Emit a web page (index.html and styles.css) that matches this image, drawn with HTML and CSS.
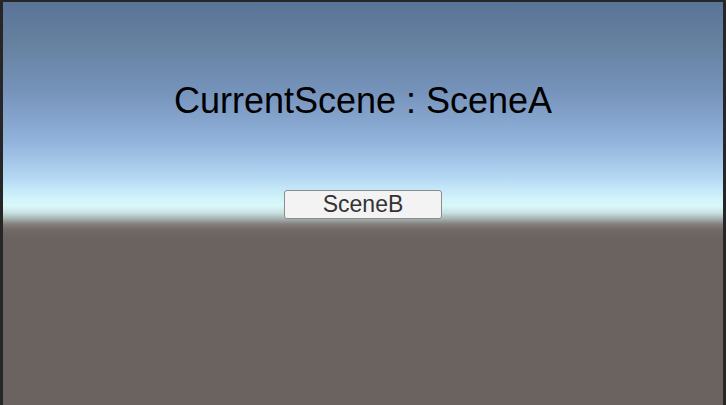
FILE: index.html
```html
<!DOCTYPE html>
<html>
<head>
<meta charset="utf-8">
<link rel="stylesheet" href="styles.css">
</head>
<body>
<div class="frame">
  <div class="view">
    <div class="title">CurrentScene : SceneA</div>
    <button class="btn">SceneB</button>
  </div>
</div>
</body>
</html>
```
FILE: styles.css
```css
html, body {
  margin: 0;
  padding: 0;
  width: 726px;
  height: 405px;
  overflow: hidden;
  background: #232323;
}
.frame {
  box-sizing: border-box;
  width: 726px;
  height: 405px;
  border-top: 2px solid #262626;
  border-left: 3px solid #262626;
  border-right: 3px solid #262626;
}
.view {
  height: 100%;
  display: flex;
  flex-direction: column;
  align-items: center;
  background: linear-gradient(to bottom,
    #5a7398 0px,
    #66819f 40px,
    #7693bb 90px,
    #92b3dc 140px,
    #b4d7f3 175px,
    #d0f2fb 195px,
    #daf8f9 204px,
    #c8e0e2 211px,
    #a4b0b0 217px,
    #85817e 222px,
    #716965 228px,
    #6b635f 236px,
    #6b635f 403px);
  font-family: "Liberation Sans", Arial, sans-serif;
}
.title {
  margin-top: 79px;
  font-size: 36px;
  line-height: 40px;
  color: #000;
  white-space: nowrap;
}
.btn {
  margin-top: 69px;
  box-sizing: border-box;
  width: 158px;
  height: 29px;
  padding: 0;
  border: 1px solid #8c8c8c;
  border-radius: 3px;
  background: #f3f3f3;
  color: #333;
  font-family: "Liberation Sans", Arial, sans-serif;
  font-size: 23px;
  line-height: 27px;
}
```
